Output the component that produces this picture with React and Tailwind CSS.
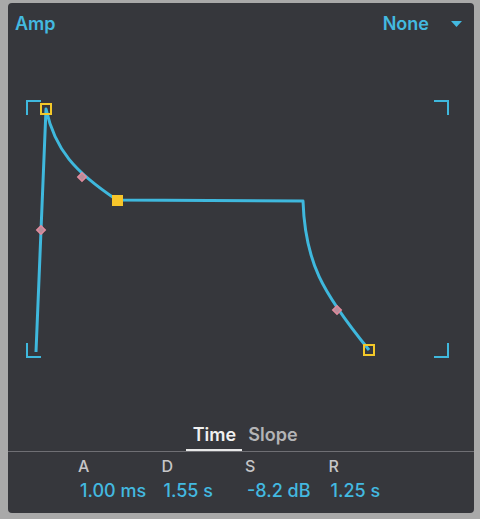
import React from 'react';

const CYAN = '#3fb8dd';

const Diamond = ({ x, y }) => (
  <rect
    x={x - 3}
    y={y - 3}
    width={6}
    height={6}
    transform={`rotate(45 ${x} ${y})`}
    fill="#b98c9a"
    stroke="#e08a9c"
    strokeWidth={1.5}
  />
);

const Envelope = () => (
  <svg width="466" height="380" viewBox="8 40 466 380" className="block">
    {/* corner brackets */}
    <g stroke={CYAN} strokeWidth={2} fill="none">
      <path d="M27 115 V101 H41" />
      <path d="M434 101 H448 V115" />
      <path d="M27 343 V357 H41" />
      <path d="M434 357 H448 V343" />
    </g>
    {/* envelope curve */}
    <path
      d="M36 352 L46 109 C55 150 75 172 117 200 L303 201 C305 262 322 292 369 350"
      stroke={CYAN}
      strokeWidth={3}
      fill="none"
      strokeLinejoin="round"
    />
    <Diamond x={41} y={230} />
    <Diamond x={82} y={177} />
    <Diamond x={337} y={310} />
    <rect x={41} y={104} width={10} height={10} fill="none" stroke="#f3c829" strokeWidth={2} />
    <rect x={112} y={195} width={11} height={11} fill="#f7c52a" />
    <rect x={364} y={345} width={10} height={10} fill="none" stroke="#f3c829" strokeWidth={2} />
  </svg>
);

const params = [
  { label: 'A', value: '1.00 ms' },
  { label: 'D', value: '1.55 s' },
  { label: 'S', value: '-8.2 dB' },
  { label: 'R', value: '1.25 s' },
];

export default function App() {
  return (
    <div
      className="w-[480px] h-[519px] bg-[#a9a9a9] pt-[3px] pl-[8px] pr-[6px] pb-[6px]"
      style={{ fontFamily: 'Inter, "Noto Sans", sans-serif' }}
    >
      <div className="w-[466px] h-[510px] bg-[#36373c] rounded-[4px] flex flex-col overflow-hidden">
        {/* header */}
        <div className="h-[37px] flex items-center justify-between pl-[7px] pr-[12px] pt-[4px]">
          <span className="text-[18px] font-semibold text-[#43b9e0]">Amp</span>
          <div className="flex items-center gap-[22px]">
            <span className="text-[18px] font-semibold text-[#43b9e0]">None</span>
            <svg width="11" height="6" viewBox="0 0 11 6">
              <path d="M0 0 H11 L5.5 6 Z" fill="#43b9e0" />
            </svg>
          </div>
        </div>

        <Envelope />

        {/* tabs */}
        <div className="h-[31px] flex justify-center pl-[2px]">
          <div className="flex items-end gap-[6px]">
            <div className="flex flex-col items-center w-[56px] border-b-2 border-[#e8e8e8]">
              <span className="text-[18px] leading-[22px] font-semibold text-[#f0f0f0] pb-[3px]">Time</span>
            </div>
            <span className="text-[18px] leading-[22px] font-semibold text-[#b4b4b6] pb-[5px]">Slope</span>
          </div>
        </div>
        <div className="h-px bg-[#6f6f74]" />

        {/* params */}
        <div className="flex pl-[70px] pt-[4px]">
          {params.map((p) => (
            <div key={p.label} className="w-[83.5px] flex flex-col">
              <span className="text-[16px] leading-[20px] font-medium text-[#c6c6c8]">{p.label}</span>
              <span className="text-[18px] font-medium text-[#43b9e0] leading-[24px] pl-[2px] mt-[3px]">{p.value}</span>
            </div>
          ))}
        </div>
      </div>
    </div>
  );
}
